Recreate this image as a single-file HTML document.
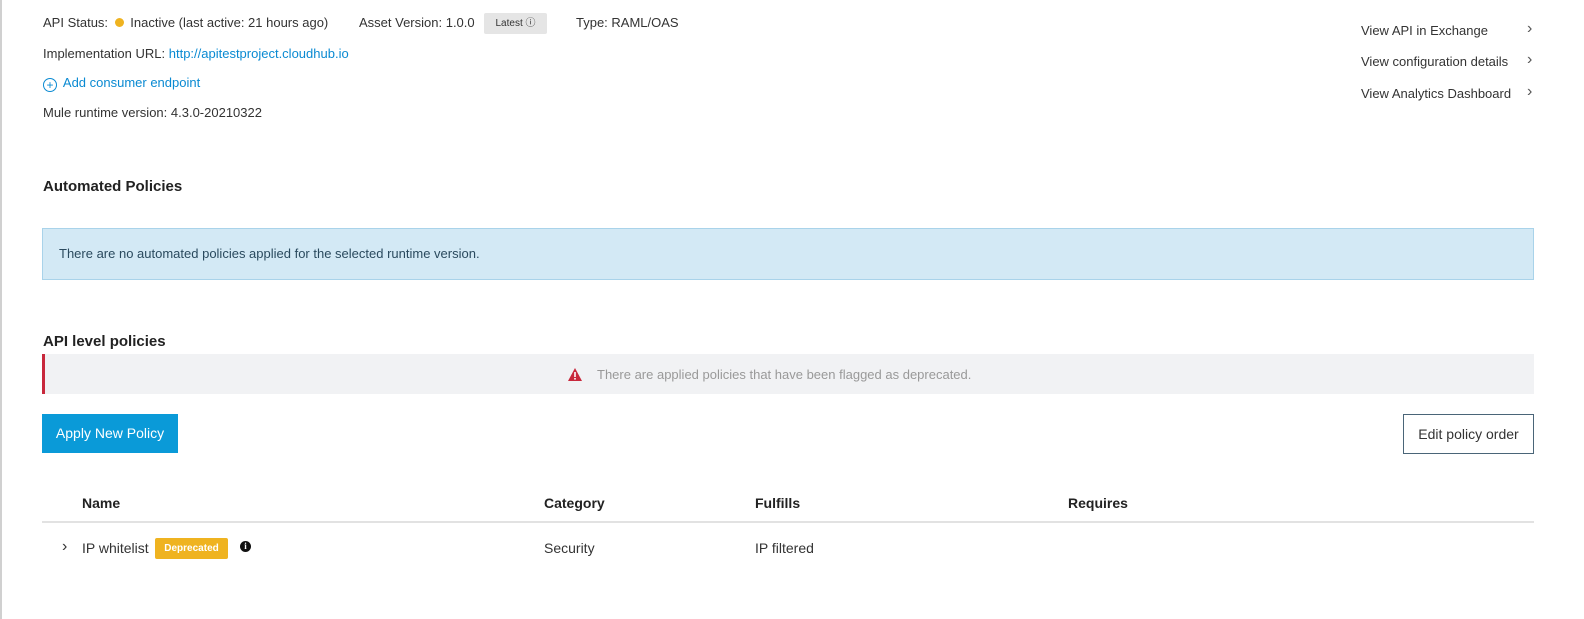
<!DOCTYPE html>
<html><head><style>
body{margin:0;width:1584px;height:619px;background:#fff;font-family:"Liberation Sans",sans-serif;font-size:13px;color:#333;position:relative;overflow:hidden}
.a{position:absolute;white-space:nowrap}
.lb{position:absolute;left:0;top:0;width:2px;height:619px;background:#d0d0d0}
.blue{color:#0a8ad2}
.chev{font-size:16px;color:#555;font-weight:normal}
</style></head><body>
<div class="lb"></div>
<div class="a" style="left:43px;top:15px">API Status: <span style="display:inline-block;width:9px;height:9px;border-radius:50%;background:#efb320;margin:0 3px 0 3px"></span> Inactive (last active: 21 hours ago)</div>
<div class="a" style="left:359px;top:15px">Asset Version: 1.0.0</div>
<div class="a" style="left:484px;top:13px;width:63px;height:21px;background:#e5e5e5;border-radius:2px;font-size:10px;line-height:21px;text-align:center">Latest ⓘ</div>
<div class="a" style="left:576px;top:15px">Type: RAML/OAS</div>
<div class="a" style="left:43px;top:46px">Implementation URL: <span class="blue">http://apitestproject.cloudhub.io</span></div>
<div class="a blue" style="left:43px;top:75px"><span style="display:inline-block;width:12px;height:12px;border:1px solid #0a8ad2;border-radius:50%;text-align:center;line-height:12px;font-size:12px;vertical-align:-2px;margin-right:3px">+</span> Add consumer endpoint</div>
<div class="a" style="left:43px;top:105px">Mule runtime version: 4.3.0-20210322</div>
<div class="a" style="left:1361px;top:23px">View API in Exchange</div>
<div class="a" style="left:1361px;top:54px">View configuration details</div>
<div class="a" style="left:1361px;top:86px">View Analytics Dashboard</div>
<div class="a chev" style="left:1527px;top:20px">›</div>
<div class="a chev" style="left:1527px;top:51px">›</div>
<div class="a chev" style="left:1527px;top:83px">›</div>
<div class="a" style="left:43px;top:178px;font-size:15px;font-weight:bold;color:#222">Automated Policies</div>
<div class="a" style="left:42px;top:228px;width:1490px;height:50px;background:#d3e9f5;border:1px solid #a9d3ea"></div>
<div class="a" style="left:59px;top:246px;color:#2a4a5e">There are no automated policies applied for the selected runtime version.</div>
<div class="a" style="left:43px;top:333px;font-size:15px;font-weight:bold;color:#222">API level policies</div>
<div class="a" style="left:42px;top:354px;width:1492px;height:40px;background:#f1f2f4;border-left:3px solid #c8283c;box-sizing:border-box"></div>
<svg class="a" style="left:568px;top:368px" width="14" height="13" viewBox="0 0 14 13"><path d="M7 0L14 13H0Z" fill="#c8283c"/><rect x="6.2" y="4" width="1.6" height="5" fill="#fff"/><rect x="6.2" y="10" width="1.6" height="1.6" fill="#fff"/></svg>
<div class="a" style="left:597px;top:367px;color:#999">There are applied policies that have been flagged as deprecated.</div>
<div class="a" style="left:42px;top:414px;width:136px;height:39px;background:#0a9ad8;color:#fff;line-height:39px;text-align:center;font-size:14px">Apply New Policy</div>
<div class="a" style="left:1403px;top:414px;width:129px;height:38px;border:1px solid #4a6578;line-height:38px;text-align:center;font-size:14px">Edit policy order</div>
<div class="a" style="left:82px;top:495px;font-size:14px;font-weight:bold;color:#222">Name</div>
<div class="a" style="left:544px;top:495px;font-size:14px;font-weight:bold;color:#222">Category</div>
<div class="a" style="left:755px;top:495px;font-size:14px;font-weight:bold;color:#222">Fulfills</div>
<div class="a" style="left:1068px;top:495px;font-size:14px;font-weight:bold;color:#222">Requires</div>
<div class="a" style="left:42px;top:521px;width:1492px;height:2px;background:#e2e2e2"></div>
<div class="a" style="left:62px;top:538px;font-size:16px">›</div>
<div class="a" style="left:82px;top:540px;font-size:14px">IP whitelist</div>
<div class="a" style="left:155px;top:538px;width:73px;height:21px;background:#efb320;color:#fff;border-radius:2px;font-size:10px;font-weight:bold;line-height:21px;text-align:center">Deprecated</div>
<div class="a" style="left:240px;top:541px;width:11px;height:11px;border-radius:50%;background:#111;color:#fff;font-size:9px;font-weight:bold;text-align:center;line-height:11px;font-family:'Liberation Serif',serif">i</div>
<div class="a" style="left:544px;top:540px;font-size:14px">Security</div>
<div class="a" style="left:755px;top:540px;font-size:14px">IP filtered</div>
</body></html>
